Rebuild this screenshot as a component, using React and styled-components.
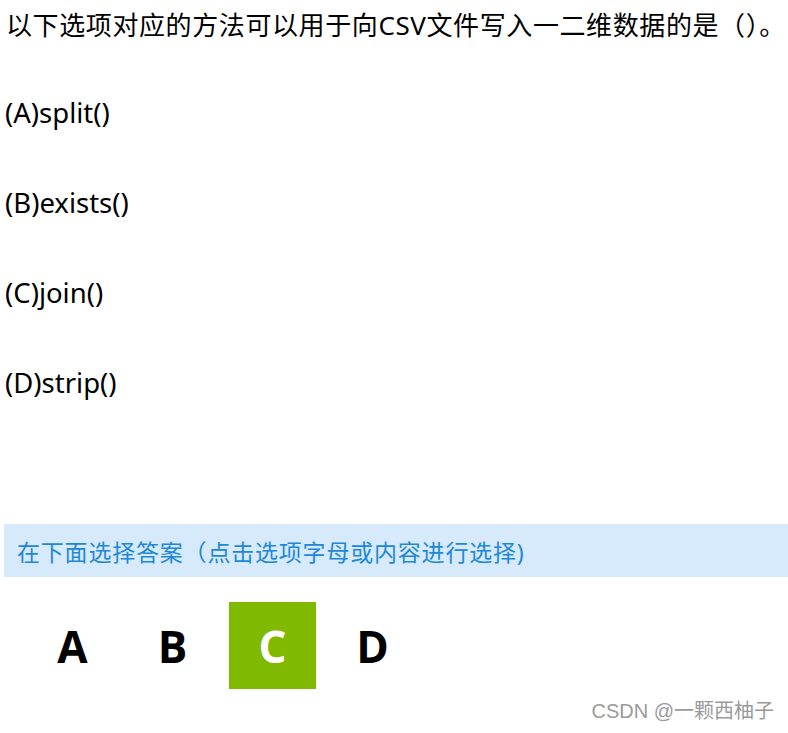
import React, { useState } from 'react';
import styled, { createGlobalStyle } from "styled-components";

const GlobalStyle = createGlobalStyle`
  body {
    margin: 0;
    background: #ffffff;
    font-family: "Noto Sans", "Noto Sans CJK SC", sans-serif;
  }
`;

const Page = styled.div`
  width: 788px;
  height: 733px;
  position: relative;
  overflow: hidden;
  background: #fff;
`;

const Question = styled.div`
  padding: 8px 0 0 6px;
  font-size: 26px;
  letter-spacing: 0.6px;
  color: #000;
  line-height: 34px;
  white-space: nowrap;
`;

const OptionList = styled.div`
  display: flex;
  flex-direction: column;
  gap: 56px;
  margin-top: 54px;
  padding-left: 5px;
`;

const Option = styled.div`
  font-size: 27.5px;
  line-height: 34px;
  color: #000;
  cursor: pointer;
`;

const Banner = styled.div`
  margin: 124px 0 0 4px;
  height: 53px;
  background: #d6eafb;
  color: #1e88d8;
  font-size: 23px;
  display: flex;
  align-items: center;
  padding-left: 13px;
  letter-spacing: 0.8px;
`;

const Choices = styled.div`
  display: flex;
  gap: 13px;
  margin: 25px 0 0 29px;
`;

const Choice = styled.button`
  width: 87px;
  height: 87px;
  border: none;
  padding: 0;
  background: ${p => (p.$active ? "#7fba00" : "transparent")};
  color: ${p => (p.$active ? "#ffffff" : "#000000")};
  font-family: "Open Sans", "Noto Sans", sans-serif;
  font-weight: 700;
  font-size: 44px;
  display: flex;
  align-items: center;
  justify-content: center;
  cursor: pointer;
`;

const Watermark = styled.div`
  position: absolute;
  right: 14px;
  bottom: 9px;
  font-size: 20px;
  color: #9a9a9a;
  font-family: "Liberation Sans", "Noto Sans CJK SC", sans-serif;
`;

const options = [
  { key: "A", text: "split()" },
  { key: "B", text: "exists()" },
  { key: "C", text: "join()" },
  { key: "D", text: "strip()" },
];

const App = () => {
  const [picked, setPicked] = useState("C");

  return (
    <Page>
      <GlobalStyle />
      <Question>以下选项对应的方法可以用于向CSV文件写入一二维数据的是（）。</Question>
      <OptionList>
        {options.map(o => (
          <Option key={o.key} onClick={() => setPicked(o.key)}>
            ({o.key}){o.text}
          </Option>
        ))}
      </OptionList>
      <Banner>在下面选择答案（点击选项字母或内容进行选择)</Banner>
      <Choices>
        {options.map(o => (
          <Choice key={o.key} $active={picked === o.key} onClick={() => setPicked(o.key)}>
            {o.key}
          </Choice>
        ))}
      </Choices>
      <Watermark>CSDN @一颗西柚子</Watermark>
    </Page>
  );
};

export default App;
